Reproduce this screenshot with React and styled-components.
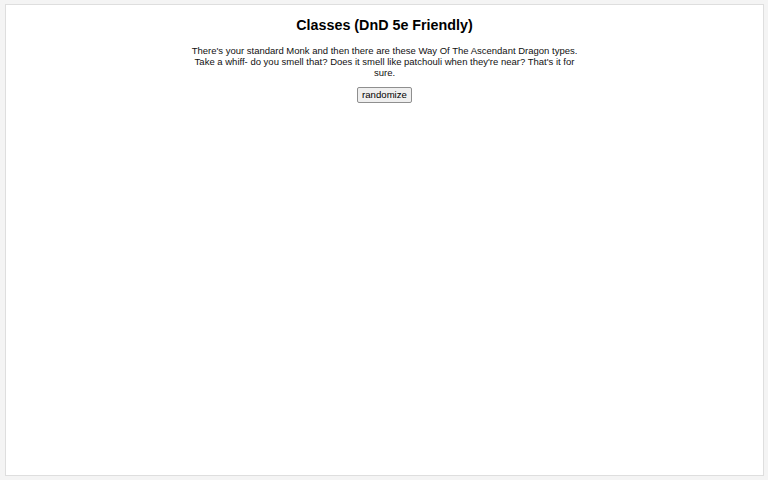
import React from "react";
import styled, { createGlobalStyle } from "styled-components";

const GlobalStyle = createGlobalStyle`
  html, body {
    margin: 0;
    padding: 0;
    background: #f4f4f4;
    font-family: "Liberation Sans", Arial, sans-serif;
  }
  body {
    padding: 4px 4px 4px 5px;
  }
`;

const Card = styled.div`
  box-sizing: border-box;
  height: 472px;
  width: 759px;
  background: #fff;
  border: 1px solid #dedede;
  display: flex;
  flex-direction: column;
  align-items: center;
  padding-top: 12px;
`;

const Title = styled.h1`
  margin: 0 0 12px;
  font-size: 14.3px;
  font-weight: bold;
  color: #000;
`;

const Desc = styled.p`
  margin: 0 0 9px;
  max-width: 392px;
  text-align: center;
  font-size: 9.5px;
  line-height: 11px;
  color: #111;
`;

const Button = styled.button`
  font-family: "Liberation Sans", Arial, sans-serif;
  font-size: 9.6px;
  padding: 1px 4px 2px;
  background: #efefef;
  border: 1px solid #8f8f8f;
  border-radius: 2px;
  color: #000;
`;

export default function App() {
  return (
    <>
      <GlobalStyle />
      <Card>
        <Title>Classes (DnD 5e Friendly)</Title>
        <Desc>
          There's your standard Monk and then there are these Way Of The
          Ascendant Dragon types. Take a whiff- do you smell that? Does it smell
          like patchouli when they're near? That's it for sure.
        </Desc>
        <Button>randomize</Button>
      </Card>
    </>
  );
}
